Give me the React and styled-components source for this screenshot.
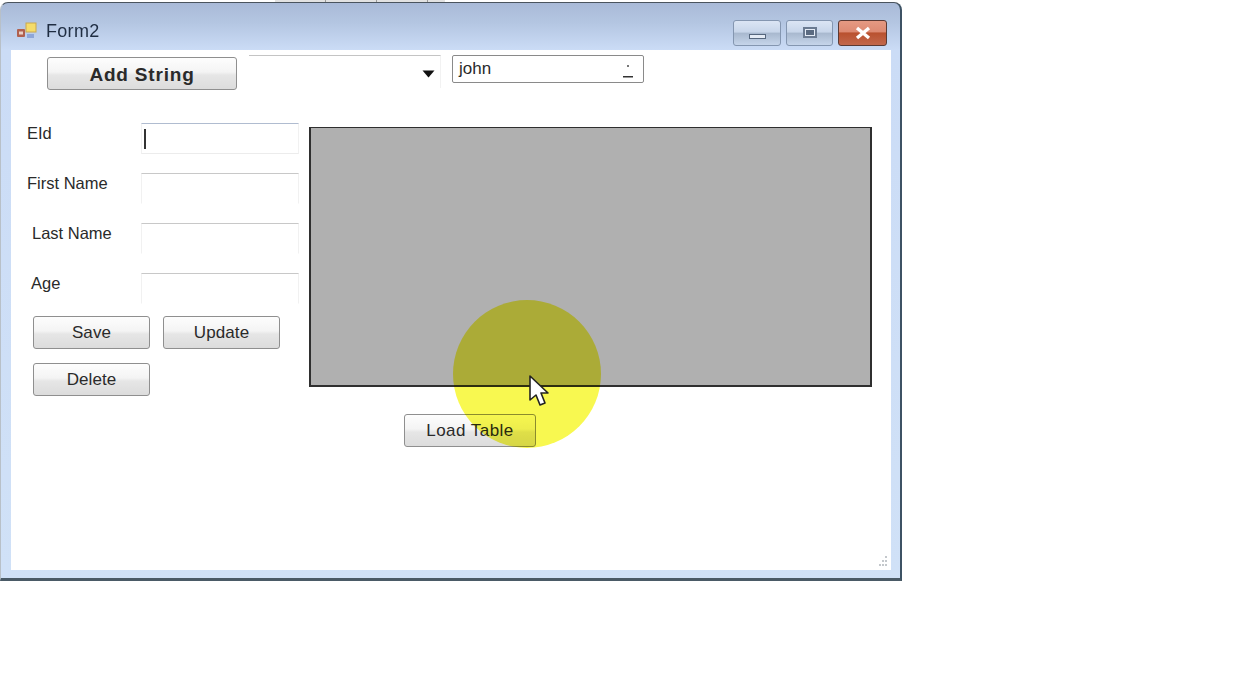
import React from 'react';
import styled, { createGlobalStyle } from 'styled-components';

const Global = createGlobalStyle`
html, body {
    margin: 0;
    padding: 0;
    background: #fff;
    overflow: hidden;
    font-family: "Liberation Sans", Arial, sans-serif;
}
`;

const Strip = styled.div`
height: 2px;
margin-left: 275px;
width: 170px;
background: repeating-linear-gradient(90deg, #e2e2e2 0 50px, #999 50px 51px);
`;

const Window = styled.div`
position: relative;
box-sizing: border-box;
width: 902px;
height: 579px;
display: flex;
flex-direction: column;
border: 1px solid #6c7884;
border-top-color: #4a545e;
border-bottom: 3px solid #4a5a66;
border-right: 2px solid #3d5264;
border-left-color: #b8c0c8;
border-radius: 8px 8px 0 0;
background: linear-gradient(180deg, #a9bad8 0, #b4c6e2 20px, #cbdcf6 47px, #d0e1f7 100%);
filter: blur(0.5px);
`;

const TitleBar = styled.div`
height: 47px;
flex: none;
display: flex;
align-items: center;
padding: 9px 13px 0 15px;
box-sizing: border-box;
`;

const Title = styled.span`
margin-left: 9px;
font-size: 18px;
letter-spacing: 0.3px;
color: #1f2d42;
`;

const Controls = styled.div`
margin-left: auto;
margin-top: 3px;
display: flex;
gap: 5px;
`;

const CtlButton = styled.div`
box-sizing: border-box;
width: ${p => p.$w}px;
height: 26px;
display: flex;
align-items: center;
justify-content: center;
border-radius: 3px;
border: 1px solid ${p => p.$close ? '#5b3a34' : '#8496b0'};
background: ${p => p.$close
    ? 'linear-gradient(180deg, #e59a83 0, #dd8a72 45%, #b9512f 50%, #c2684c 100%)'
    : 'linear-gradient(180deg, #dbe5f4 0, #c8d6ea 45%, #a9b9cf 52%, #c6d5ea 100%)'};
`;

const MinGlyph = styled.span`
display: block;
width: 17px;
height: 5px;
margin-top: 8px;
box-sizing: border-box;
border: 1px solid #56677e;
background: #e4ebf5;
`;

const MaxGlyph = styled.span`
display: block;
width: 14px;
height: 11px;
box-sizing: border-box;
border: 2px solid #6a7a90;
background: #5a6a80;
box-shadow: inset 0 0 0 1px #e4ebf5;
`;

const Client = styled.div`
position: relative;
flex: 1;
display: flex;
flex-direction: column;
margin: 0 9px 8px 10px;
background: #fff;
`;

const TopRow = styled.div`
height: 73px;
flex: none;
box-sizing: border-box;
padding: 5px 0 0 36px;
display: flex;
align-items: flex-start;
`;

const PushButton = styled.button`
box-sizing: border-box;
flex: none;
padding: ${p => p.$bold ? '2px' : '1px'} 0 0;
width: ${p => p.$w || 117}px;
height: 33px;
border: 1.5px solid #8f8f8f;
border-radius: 3px;
background: linear-gradient(180deg, #fdfdfd 0, #f4f4f4 45%, #e6e6e6 55%, #dcdcdc 100%);
color: #2a2a2a;
font-family: "Liberation Sans", Arial, sans-serif;
font-size: ${p => p.$bold ? 19 : 17}px;
font-weight: ${p => p.$bold ? 700 : 400};
letter-spacing: ${p => p.$bold ? '0.8px' : '0.1px'};
`;

const AddButton = styled(PushButton)`
margin-top: 2px;
`;

const Combo = styled.div`
box-sizing: border-box;
flex: none;
margin-left: 12px;
width: 192px;
height: 33px;
border-top: 1.5px solid #c4c4c4;
border-right: 1px solid #f2f2f2;
display: flex;
align-items: center;
justify-content: flex-end;
padding: 0 5px 0 0;
`;

const Caret = styled.svg`
width: 13px;
height: 9px;
margin-top: 2px;
`;

const Spinner = styled.div`
box-sizing: border-box;
flex: none;
margin-left: 11px;
width: 192px;
height: 28px;
border: 1.5px solid #8a8a8a;
border-radius: 2px;
display: flex;
align-items: center;
justify-content: space-between;
padding: 0 10px 0 6px;
font-size: 17px;
color: #2a2a2a;
`;

const SpinGlyph = styled.svg`
width: 10px;
height: 20px;
`;

const Body = styled.div`
display: flex;
align-items: flex-start;
`;

const LeftCol = styled.div`
width: 288px;
flex: none;
display: flex;
flex-direction: column;
`;

const Fields = styled.div`
display: flex;
flex-direction: column;
gap: 19px;
`;

const FieldRow = styled.div`
height: 31px;
display: flex;
align-items: flex-start;
`;

const Label = styled.label`
width: ${p => 130 - (p.$indent || 16)}px;
margin-left: ${p => p.$indent || 16}px;
line-height: 20px;
font-size: 16.5px;
color: #2a2a2a;
white-space: nowrap;
`;

const Input = styled.div`
box-sizing: border-box;
width: 158px;
height: 31px;
padding: 5px 0 0 2px;
border-top: 1.5px solid ${p => p.$focus ? '#b0bcd0' : '#c8c8c8'};
border-left: 1px solid #f1f1f1;
border-right: 1px solid #f1f1f1;
border-bottom: 1px solid ${p => p.$focus ? '#ececec' : '#fff'};
`;

const TextCaret = styled.span`
display: block;
width: 2px;
height: 20px;
background: #333;
`;

const ButtonGrid = styled.div`
margin: 12px 0 0 22px;
display: grid;
grid-template-columns: 117px 117px;
column-gap: 13px;
row-gap: 14px;
`;

const RightCol = styled.div`
padding-top: 4px;
display: flex;
flex-direction: column;
align-items: flex-start;
`;

const DataGrid = styled.div`
box-sizing: border-box;
width: 563px;
height: 260px;
margin-left: 10px;
background: #b0b0b0;
border: 2px solid #2f2f2f;
border-top-width: 1.5px;
`;

const LoadButton = styled(PushButton)`
margin: 27px 0 0 105px;
letter-spacing: 0.45px;
`;

const Spot = styled.div`
position: absolute;
left: 442px;
top: 250px;
width: 148px;
height: 148px;
border-radius: 50%;
background: #f8f850;
mix-blend-mode: multiply;
`;

const Cursor = styled.svg`
position: absolute;
left: 517px;
top: 325px;
width: 22px;
height: 33px;
`;

const Grip = styled.svg`
position: absolute;
right: 2px;
bottom: 3px;
width: 12px;
height: 12px;
`;

function FormIcon() {
    return (
        <svg width="21" height="21" viewBox="0 0 21 21">
            <rect x="1" y="8" width="8" height="8" rx="1" fill="#b0604e" />
            <rect x="3" y="10.5" width="4" height="3" fill="#e9cfc4" />
            <rect x="10" y="2" width="10" height="9" fill="#f5dc6a" stroke="#c9a84e" />
            <rect x="11" y="13" width="7" height="4" fill="#8ea6d8" />
        </svg>
    );
}

const fields = [
    { label: 'EId', focus: true },
    { label: 'First Name' },
    { label: 'Last Name', indent: 21 },
    { label: 'Age', indent: 20 },
];

export default function App() {
    return (
        <>
            <Global />
            <Strip />
            <Window>
                <TitleBar>
                    <FormIcon />
                    <Title>Form2</Title>
                    <Controls>
                        <CtlButton $w={48}><MinGlyph /></CtlButton>
                        <CtlButton $w={47}><MaxGlyph /></CtlButton>
                        <CtlButton $w={49} $close>
                            <svg width="18" height="14" viewBox="0 0 18 14">
                                <path d="M3 2 L15 12 M15 2 L3 12" stroke="#fff" strokeWidth="3.4" />
                            </svg>
                        </CtlButton>
                    </Controls>
                </TitleBar>
                <Client>
                    <TopRow>
                        <AddButton $w={190} $bold>Add String</AddButton>
                        <Combo>
                            <Caret viewBox="0 0 13 9">
                                <path d="M0.5 1.5 H12.5 L6.5 8.5 Z" fill="#111" />
                            </Caret>
                        </Combo>
                        <Spinner>
                            john
                            <SpinGlyph viewBox="0 0 10 20">
                                <rect x="4" y="6" width="2" height="2" fill="#777" />
                                <rect x="0" y="17" width="10" height="1.5" fill="#333" />
                            </SpinGlyph>
                        </Spinner>
                    </TopRow>
                    <Body>
                        <LeftCol>
                            <Fields>
                                {fields.map(f => (
                                    <FieldRow key={f.label}>
                                        <Label $indent={f.indent}>{f.label}</Label>
                                        <Input $focus={f.focus}>{f.focus && <TextCaret />}</Input>
                                    </FieldRow>
                                ))}
                            </Fields>
                            <ButtonGrid>
                                <PushButton>Save</PushButton>
                                <PushButton>Update</PushButton>
                                <PushButton>Delete</PushButton>
                            </ButtonGrid>
                        </LeftCol>
                        <RightCol>
                            <DataGrid />
                            <LoadButton $w={132}>Load Table</LoadButton>
                        </RightCol>
                    </Body>
                    <Spot />
                    <Cursor viewBox="0 0 22 33">
                        <path d="M2 1 V25 L8 20 L12 30 L17 28 L13 18 L20 18 Z" fill="#fff" stroke="#222" strokeWidth="1.6" strokeLinejoin="round" />
                    </Cursor>
                    <Grip viewBox="0 0 12 12">
                        <g fill="#c4c8cc">
                            <rect x="8" y="1" width="2" height="2" />
                            <rect x="5" y="5" width="2" height="2" />
                            <rect x="8" y="5" width="2" height="2" />
                            <rect x="2" y="9" width="2" height="2" />
                            <rect x="5" y="9" width="2" height="2" />
                            <rect x="8" y="9" width="2" height="2" />
                        </g>
                    </Grip>
                </Client>
            </Window>
        </>
    );
}
